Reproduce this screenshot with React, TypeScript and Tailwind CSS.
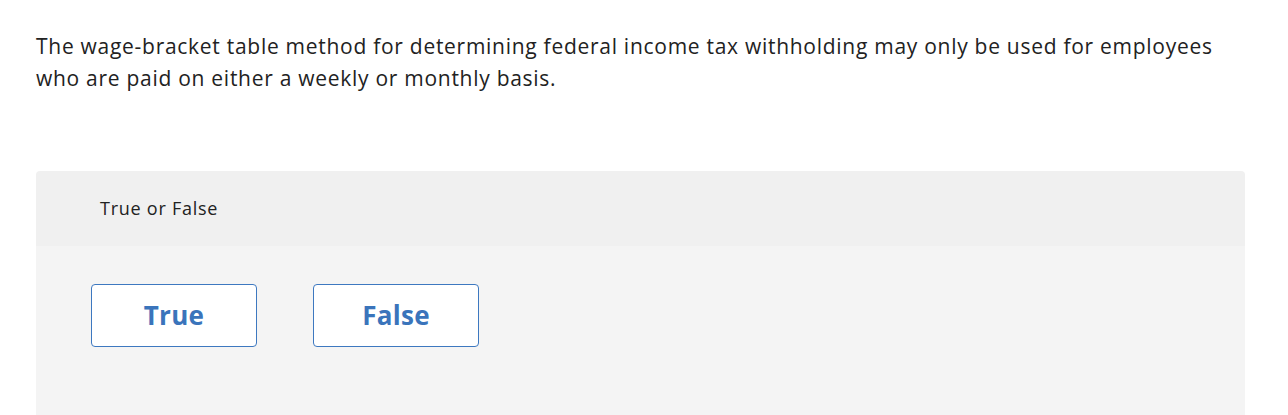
export default function App() {
  return (
    <div className="bg-white px-9 pt-[30px] text-[#222]" style={{ fontFamily: '"Open Sans", sans-serif' }}>
      <p className="max-w-[1200px] text-[21px] leading-[32px] tracking-[0.72px]">
        The wage-bracket table method for determining federal income tax withholding may only be used for employees
        who are paid on either a weekly or monthly basis.
      </p>

      <div className="mt-[77px] w-[1209px] overflow-hidden rounded-t">
        <div className="flex h-[75px] items-center bg-[#f0f0f0] pl-16 text-[18px] tracking-[0.75px]">True or False</div>
        <div className="flex h-[169px] gap-14 bg-[#f4f4f4] pl-[55px] pt-[38px]">
          {["True", "False"].map((label) => (
            <button
              key={label}
              type="button"
              className="h-[63px] w-[166px] rounded border border-[#3d78c0] bg-white text-[26px] font-bold tracking-[0.3px] text-[#3a74bb]"
            >
              {label}
            </button>
          ))}
        </div>
      </div>
    </div>
  );
}
